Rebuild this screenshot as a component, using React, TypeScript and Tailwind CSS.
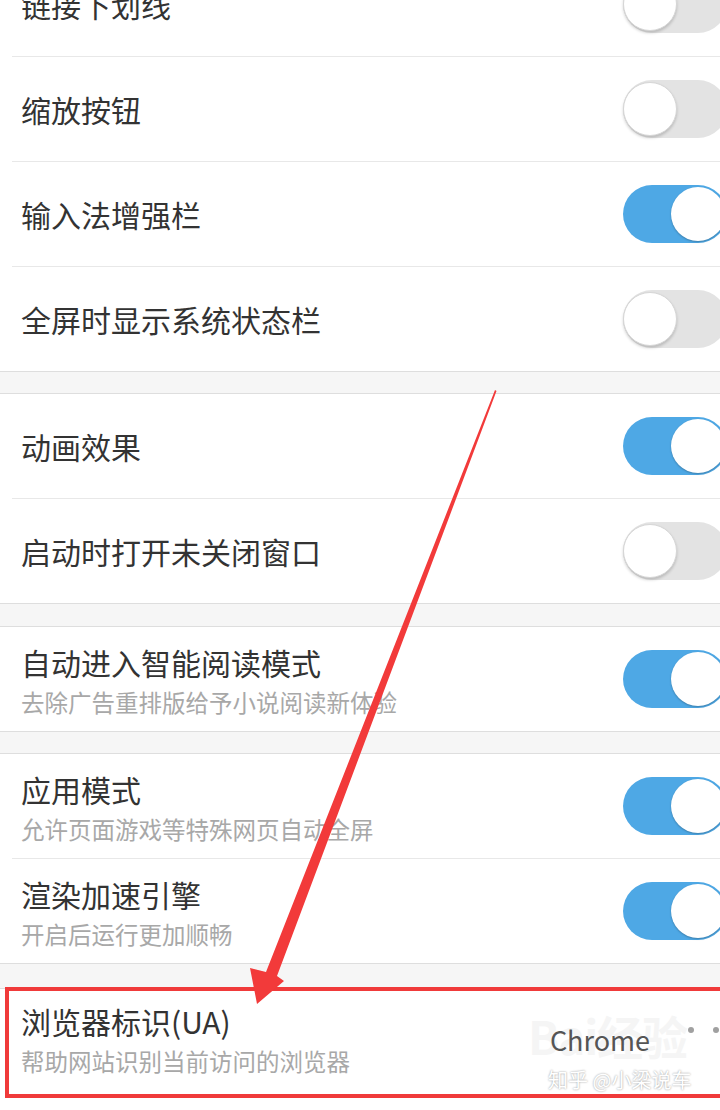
const font = { fontFamily: '"Noto Sans CJK SC", "Noto Sans", sans-serif' };

type Item = { title: string; sub?: string; on?: boolean };

function Toggle({ on }: { on?: boolean }) {
  return (
    <div
      className={`relative h-[58px] w-[104px] shrink-0 rounded-full ${on ? "bg-[#4ea8e5]" : "bg-[#e3e3e3]"}`}
    >
      <div
        className={`absolute top-[2px] h-[54px] w-[54px] rounded-full bg-white ${
          on ? "right-[2px] shadow-[0_1px_2px_rgba(0,0,0,0.25)]" : "left-0 border border-[#d6d6d6] shadow-[0_2px_3px_rgba(0,0,0,0.18)]"
        }`}
      />
    </div>
  );
}

function Row({ item, last }: { item: Item; last?: boolean }) {
  return (
    <div>
      <div className="flex h-[104px] items-center pl-[21px]">
        <div className="flex grow flex-col">
          <span className="text-[30px] leading-[38px] text-[#333]">{item.title}</span>
          {item.sub && (
            <span className="mt-[7px] text-[23.5px] leading-[28px] text-[#a8a8a8]">{item.sub}</span>
          )}
        </div>
        <div className="ml-auto w-[97px] overflow-visible">
          <Toggle on={item.on} />
        </div>
      </div>
      {!last && <div className="ml-3 h-px bg-[#e8e8e8]" />}
    </div>
  );
}

function Group({ items }: { items: Item[] }) {
  return (
    <div className="bg-white">
      {items.map((it, i) => (
        <Row key={it.title} item={it} last={i === items.length - 1} />
      ))}
    </div>
  );
}

function Gap({ h }: { h: string }) {
  return <div className={`${h} border-y border-[#dedede] bg-[#f6f6f6]`} />;
}

export default function App() {
  return (
    <div style={font} className="relative h-[1110px] w-[720px] overflow-hidden bg-white">
      <div className="-mt-[48px]">
        <Group
          items={[
            { title: "链接下划线" },
            { title: "缩放按钮" },
            { title: "输入法增强栏", on: true },
            { title: "全屏时显示系统状态栏" },
          ]}
        />
        <Gap h="h-[23px]" />
        <Group items={[{ title: "动画效果", on: true }, { title: "启动时打开未关闭窗口" }]} />
        <Gap h="h-[24px]" />
        <Group items={[{ title: "自动进入智能阅读模式", sub: "去除广告重排版给予小说阅读新体验", on: true }]} />
        <Gap h="h-[23px]" />
        <Group
          items={[
            { title: "应用模式", sub: "允许页面游戏等特殊网页自动全屏", on: true },
            { title: "渲染加速引擎", sub: "开启后运行更加顺畅", on: true },
          ]}
        />
        <Gap h="h-[26px]" />
        <div className="relative flex h-[102px] items-center bg-white pl-[21px]">
          <div className="flex grow flex-col">
            <span className="-mt-[4px] text-[30px] leading-[38px] text-[#333]">浏览器标识(UA)</span>
            <span className="mt-[7px] text-[23.5px] leading-[28px] text-[#a8a8a8]">帮助网站识别当前访问的浏览器</span>
          </div>
          <span className="absolute left-[528px] top-[12px] text-[46px] font-bold tracking-tight text-[#f5f5f5]">
            Bai经验
          </span>
          <span className="relative mr-[70px] text-[27px] text-[#555]">Chrome</span>
          <span className="absolute left-[688px] top-[38px] h-[6px] w-[6px] rounded-full bg-[#a0a0a0]" />
          <span className="absolute left-[713px] top-[38px] h-[6px] w-[6px] rounded-full bg-[#a0a0a0]" />
          <span className="absolute left-[548px] top-[76px] text-[20px] text-white [text-shadow:0_0_2px_rgba(0,0,0,0.45)]">
            知乎 @小梁说车
          </span>
        </div>
        <div className="h-[20px] bg-white" />
      </div>

      <div className="absolute left-[5px] top-[987px] h-[111px] w-[730px] border-4 border-[#f03a3a]" />

      <svg className="absolute left-0 top-0" width="720" height="1110" viewBox="0 0 720 1110">
        <polygon
          points="495,390 496.5,391 277,976 284,981 257,1004 250,968 266,972"
          fill="#f23a3a"
        />
      </svg>
    </div>
  );
}
